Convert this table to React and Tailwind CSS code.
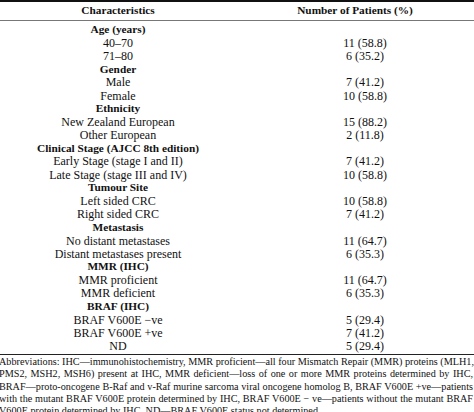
const SECTIONS = [
  { title: "Age (years)", rows: [["40–70", "11 (58.8)"], ["71–80", "6 (35.2)"]] },
  { title: "Gender", rows: [["Male", "7 (41.2)"], ["Female", "10 (58.8)"]] },
  {
    title: "Ethnicity",
    rows: [["New Zealand European", "15 (88.2)"], ["Other European", "2 (11.8)"]],
  },
  {
    title: "Clinical Stage (AJCC 8th edition)",
    rows: [
      ["Early Stage (stage I and II)", "7 (41.2)"],
      ["Late Stage (stage III and IV)", "10 (58.8)"],
    ],
  },
  {
    title: "Tumour Site",
    rows: [["Left sided CRC", "10 (58.8)"], ["Right sided CRC", "7 (41.2)"]],
  },
  {
    title: "Metastasis",
    rows: [
      ["No distant metastases", "11 (64.7)"],
      ["Distant metastases present", "6 (35.3)"],
    ],
  },
  {
    title: "MMR (IHC)",
    rows: [["MMR proficient", "11 (64.7)"], ["MMR deficient", "6 (35.3)"]],
  },
  {
    title: "BRAF (IHC)",
    rows: [
      ["BRAF V600E −ve", "5 (29.4)"],
      ["BRAF V600E +ve", "7 (41.2)"],
      ["ND", "5 (29.4)"],
    ],
  },
];

const NOTE_LINES = [
  "Abbreviations: IHC—immunohistochemistry, MMR proficient—all four Mismatch Repair (MMR) proteins (MLH1,",
  "PMS2, MSH2, MSH6) present at IHC, MMR deficient—loss of one or more MMR proteins determined by IHC,",
  "BRAF—proto-oncogene B-Raf and v-Raf murine sarcoma viral oncogene homolog B, BRAF V600E +ve—patients",
  "with the mutant BRAF V600E protein determined by IHC, BRAF V600E − ve—patients without the mutant BRAF",
];

const Row = ({ left, right, bold }) => (
  <div className="grid h-[13.2px] grid-cols-[236px_238px] items-center leading-none">
    <div className={bold ? "text-center text-[11.3px] font-bold" : "text-center text-[12px]"}>
      {left}
    </div>
    <div className="pl-[20px] text-center text-[12px]">{right}</div>
  </div>
);

export default function App() {
  return (
    <div className="h-[412px] w-[474px] overflow-hidden bg-white text-[#111] [font-family:'Liberation_Serif',serif]">
      <div className="h-[2px] bg-[#111]" />
      <div className="grid h-[18px] grid-cols-[236px_238px] items-center text-[11.3px] font-bold leading-none">
        <div className="text-center">Characteristics</div>
        <div className="text-center">Number of Patients (%)</div>
      </div>
      <div className="h-px bg-[#777]" />
      <div className="pt-[2px]">
        {SECTIONS.map((section) => (
          <div key={section.title}>
            <Row left={section.title} right="" bold />
            {section.rows.map(([l, r]) => (
              <Row key={l} left={l} right={r} />
            ))}
          </div>
        ))}
      </div>
      <div className="mt-[1px] h-[1.5px] bg-[#222]" />
      <div className="-ml-px w-[474px] pt-[1px] text-[10.2px] leading-[12.3px]">
        {NOTE_LINES.map((line) => (
          <div key={line} className="whitespace-nowrap text-justify [text-align-last:justify]">
            {line}
          </div>
        ))}
        <div className="whitespace-nowrap">
          V600E protein determined by IHC, ND—BRAF V600E status not determined.
        </div>
      </div>
    </div>
  );
}
